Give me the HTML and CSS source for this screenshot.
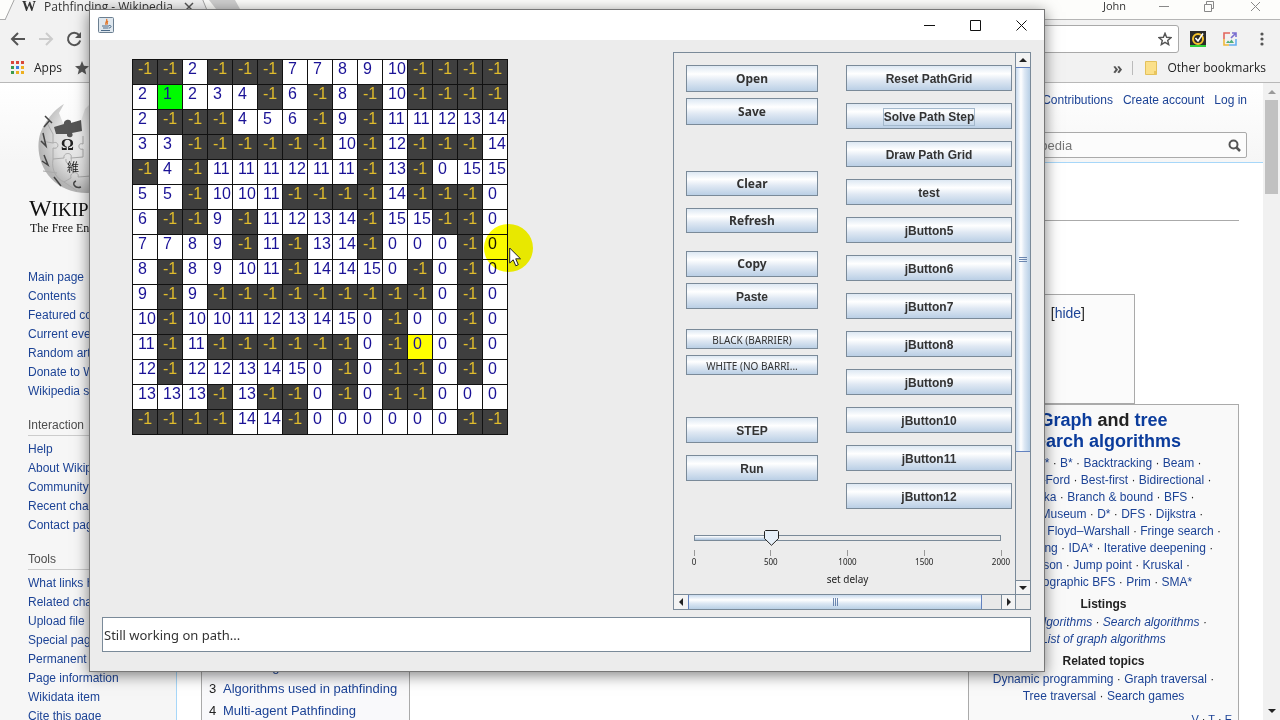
FILE: index.html
```html
<!DOCTYPE html>
<html lang="en">
<head>
  <meta charset="UTF-8">
  <title>Pathfinding - Wikipedia</title>
  <link rel="stylesheet" href="styles.css">
</head>
<body>
  <div class="browser">
    <div class="tabstrip">
      <svg class="tab-shape" width="245" height="20" viewBox="0 0 245 20">
        <path d="M0 20H5L15 -2H202L211 20H245" fill="#f2f2f2" stroke="#a5a5a5"/>
        <path d="M209 0H235L240 9H216Z" fill="#cfcfcf"/>
      </svg>
      <span class="favicon">W</span>
      <span class="tab-title">Pathfinding - Wikipedia</span>
      <svg class="tab-close" width="10" height="10" viewBox="0 0 10 10"><path d="M1 1L9 9M9 1L1 9" stroke="#555" stroke-width="1.5"/></svg>
      <span class="user">John</span>
      <svg class="win-buttons" width="104" height="14" viewBox="0 0 104 14" fill="none" stroke="#888">
        <path d="M1 6.5H11"/>
        <path d="M46.500 4.500h7v7h-7zM48.500 4V1.500h7v7H54"/>
        <path d="M93 2L102 11M102 2L93 11"/>
      </svg>
    </div>

    <div class="toolbar">
      <svg class="nav" width="18" height="18" viewBox="0 0 18 18"><path d="M16 9H3M9 3L3 9L9 15" fill="none" stroke="#555" stroke-width="2"/></svg>
      <svg class="nav" width="18" height="18" viewBox="0 0 18 18"><path d="M2 9H15M9 3L15 9L9 15" fill="none" stroke="#ccc" stroke-width="2"/></svg>
      <svg class="nav" width="18" height="18" viewBox="0 0 18 18"><path d="M14 5A6.200 6.200 0 1 0 15.200 10.500" fill="none" stroke="#555" stroke-width="2"/><path d="M16 2V8H10Z" fill="#555"/></svg>
      <div class="omnibox">
        <svg width="14" height="14" viewBox="0 0 14 14"><path d="M7 1.300L8.600 5.300L13 5.600L9.700 8.400L10.700 12.600L7 10.300L3.300 12.600L4.300 8.400L1 5.600L5.400 5.300Z" fill="none" stroke="#555" stroke-width="1.400"/></svg>
      </div>
      <svg class="ext" width="16" height="16" viewBox="0 0 16 16">
        <rect width="16" height="16" fill="#2b2b2b"/><rect y="14" width="16" height="2" fill="#2fd03a"/>
        <circle cx="8" cy="8" r="5" fill="none" stroke="#f5c32c" stroke-width="2"/>
        <path d="M5.500 7L8 10L13 2.500" fill="none" stroke="#fff" stroke-width="1.600"/>
      </svg>
      <svg class="ext" width="14" height="14" viewBox="0 0 14 14" fill="none" stroke-width="1.600">
        <path d="M7 1H1V7" stroke="#e2655c"/><path d="M1 7V13H6" stroke="#eeb93c"/><path d="M6 13H13V7" stroke="#65aef0"/>
        <path d="M8 6L12.500 1.500M9 1H13V5" stroke="#7a6fd0"/><path d="M3 11L5 8.500L6.500 10L8.500 7.500L11 11Z" fill="#4fae7c"/>
      </svg>
      <svg class="dots" width="4" height="16" viewBox="0 0 4 16" fill="#555"><circle cx="2" cy="3" r="1.600"/><circle cx="2" cy="8" r="1.600"/><circle cx="2" cy="13" r="1.600"/></svg>
    </div>

    <div class="bookmarks">
      <svg width="13" height="13" viewBox="0 0 13 13">
        <path d="M0 0h3v3h-3zM5 0h3v3h-3zM10 0h3v3h-3zM0 5h3v3h-3z" fill="#d9483b"/>
        <path d="M0 5h3v3h-3zM0 10h3v3h-3z" fill="#3b9a4d"/>
        <path d="M5 5h3v3h-3z" fill="#3d7fe0"/><path d="M5 10h3v3h-3zM10 5h3v3h-3zM10 10h3v3h-3z" fill="#edb021"/>
      </svg>
      <a href="#">Apps</a>
      <svg class="bm-star" width="14" height="14" viewBox="0 0 14 14"><path d="M7 0L8.900 4.800L14 5.200L10.100 8.500L11.300 13.500L7 10.800L2.700 13.500L3.900 8.500L0 5.200L5.100 4.800Z" fill="#555"/></svg>
      <span class="more">»</span>
      <svg class="folder" width="12" height="14" viewBox="0 0 12 14"><path d="M.5 .5H11.500V13.500H.5Z" fill="#fbe08a" stroke="#e3c15c"/><path d="M9 10h2.500v3.500H9z" fill="#e9c55e"/></svg>
      <a href="#">Other bookmarks</a>
    </div>

    <div class="page">
      <div class="sidebar">
        <div class="logo">
          <svg width="100" height="94" viewBox="0 0 100 94">
            <defs><radialGradient id="globe" cx="60%" cy="40%" r="60%"><stop offset="0" stop-color="#f7f7f7"/><stop offset=".7" stop-color="#dedede"/><stop offset="1" stop-color="#b4b4b4"/></radialGradient></defs>
            <path d="M27 3C18 8 5 22 2 38C-2 64 16 92 50 92C76 92 96 72 96 46C96 22 78 2 54 2L48 8L44 20L26 22L22 12Z" fill="url(#globe)"/>
            <path d="M17 26L27 23C26 18 35 17 34 22L44 19L45 30L35 32C38 37 29 38 30 33L19 33Z" fill="#555"/>
            <path d="M16 33V42C22 39 23 49 16 47V58L27 57C26 51 36 51 34 57L46 56M34 57C36 63 28 65 29 58M16 58C14 70 20 78 27 81L34 77C32 70 43 70 41 76L54 75M46 35V43C40 41 41 50 46 48V56M10 22L16 33M4 40L16 42M6 70L20 72M27 81L40 90" fill="none" stroke="#aaa"/>
            <path d="M8 15L15 22M13 19L7 26M6 32L9 45L4 40M7 54L11 64L5 60M17 76L24 85M39 80C34 82 38 88 44 86" fill="none" stroke="#444" stroke-width="1.500"/>
            <text class="glyph" x="24" y="49">Ω</text>
            <text class="glyph cjk" x="30" y="71">維</text>
          </svg>
          <div class="wordmark">W<small>IKIPEDI</small>A</div>
          <div class="tagline">The Free Encyclopedia</div>
        </div>
        <ul>
          <li><a href="#">Main page</a></li>
          <li><a href="#">Contents</a></li>
          <li><a href="#">Featured content</a></li>
          <li><a href="#">Current events</a></li>
          <li><a href="#">Random article</a></li>
          <li><a href="#">Donate to Wikipedia</a></li>
          <li><a href="#">Wikipedia store</a></li>
        </ul>
        <h3>Interaction</h3>
        <ul>
          <li><a href="#">Help</a></li>
          <li><a href="#">About Wikipedia</a></li>
          <li><a href="#">Community portal</a></li>
          <li><a href="#">Recent changes</a></li>
          <li><a href="#">Contact page</a></li>
        </ul>
        <h3>Tools</h3>
        <ul>
          <li><a href="#">What links here</a></li>
          <li><a href="#">Related changes</a></li>
          <li><a href="#">Upload file</a></li>
          <li><a href="#">Special pages</a></li>
          <li><a href="#">Permanent link</a></li>
          <li><a href="#">Page information</a></li>
          <li><a href="#">Wikidata item</a></li>
          <li><a href="#">Cite this page</a></li>
        </ul>
      </div>

      <div class="main">
        <div class="head">
          <div class="personal">
            <a href="#">Contributions</a>
            <a href="#">Create account</a>
            <a href="#">Log in</a>
          </div>
          <div class="search">
            <input type="text" placeholder="Search Wikipedia" aria-label="Search Wikipedia">
            <svg width="13" height="13" viewBox="0 0 13 13"><circle cx="5.500" cy="5.500" r="4" fill="none" stroke="#555" stroke-width="2"/><path d="M8.500 8.500L12 12" stroke="#555" stroke-width="2.500"/></svg>
          </div>
        </div>
        <div class="article">
          <div class="title-rule"></div>
          <div class="notice">[<a href="#">hide</a>]</div>
          <div class="columns">
            <div class="toc">
              <div><span>2</span><a href="#">In video games</a></div>
              <div><span>3</span><a href="#">Algorithms used in pathfinding</a></div>
              <div><span>4</span><a href="#">Multi-agent Pathfinding</a></div>
            </div>
            <div class="infobox">
              <h2><a href="#">Graph</a> and <a href="#">tree</a><br><a href="#">search algorithms</a></h2>
              <p><a href="#">α–β</a> · <a href="#">A*</a> · <a href="#">B*</a> · <a href="#">Backtracking</a> · <a href="#">Beam</a> ·</p>
              <p><a href="#">Bellman–Ford</a> · <a href="#">Best-first</a> · <a href="#">Bidirectional</a> ·</p>
              <p><a href="#">Borůvka</a> · <a href="#">Branch &amp; bound</a> · <a href="#">BFS</a> ·</p>
              <p><a href="#">British Museum</a> · <a href="#">D*</a> · <a href="#">DFS</a> · <a href="#">Dijkstra</a> ·</p>
              <p><a href="#">Edmonds</a> · <a href="#">Floyd–Warshall</a> · <a href="#">Fringe search</a> ·</p>
              <p><a href="#">Hill climbing</a> · <a href="#">IDA*</a> · <a href="#">Iterative deepening</a> ·</p>
              <p><a href="#">Johnson</a> · <a href="#">Jump point</a> · <a href="#">Kruskal</a> ·</p>
              <p><a href="#">Lexicographic BFS</a> · <a href="#">Prim</a> · <a href="#">SMA*</a></p>
              <h4>Listings</h4>
              <p class="italic"><a href="#">Graph algorithms</a> · <a href="#">Search algorithms</a> ·</p>
              <p class="italic"><a href="#">List of graph algorithms</a></p>
              <h4>Related topics</h4>
              <p><a href="#">Dynamic programming</a> · <a href="#">Graph traversal</a> ·</p>
              <p><a href="#">Tree traversal</a> · <a href="#">Search games</a></p>
              <p class="vte"><a href="#">V</a> · <a href="#">T</a> · <a href="#">E</a></p>
            </div>
          </div>
        </div>
      </div>

      <div class="page-scroll">
        <i class="arrow up"></i>
        <div class="page-thumb"></div>
        <i class="arrow down"></i>
      </div>
    </div>
  </div>

  <div class="window">
    <div class="titlebar">
      <svg width="16" height="16" viewBox="0 0 16 16">
        <rect x=".5" y=".5" width="15" height="15" rx="1" fill="#dfe7ee" stroke="#6b7f91"/>
        <path d="M8.500 2C10 4 6.500 5 8 8M10 4C8.500 5 9 6 9.500 7.500" fill="none" stroke="#e0762b" stroke-width="1.300"/>
        <path d="M4 9H11M5 11H10.500M3 13.500H12M11 8.500C14 8 13.500 11 11 11" fill="none" stroke="#4c6a88"/>
      </svg>
      <div class="controls">
        <button aria-label="Minimize"><svg width="11" height="11" viewBox="0 0 11 11"><path d="M0 5.500H11" stroke="#111"/></svg></button>
        <button aria-label="Maximize"><svg width="11" height="11" viewBox="0 0 11 11"><path d="M.5 .5H10.500V10.500H.5Z" fill="none" stroke="#111"/></svg></button>
        <button aria-label="Close"><svg width="11" height="11" viewBox="0 0 11 11"><path d="M.5 .5L10.500 10.500M10.500 .5L.5 10.500" stroke="#111"/></svg></button>
      </div>
    </div>

    <div class="body">
      <div class="row">
        <div class="board">
          <table id="grid"></table>
        </div>

        <div class="pane">
          <div class="view">
            <div class="buttons">
              <div class="col">
                <div class="group tall">
                  <button class="tahoma">Open</button>
                  <button class="tahoma">Save</button>
                </div>
                <div class="group edit">
                  <button class="tahoma">Clear</button>
                  <button class="tahoma">Refresh</button>
                </div>
                <div class="group clip">
                  <button class="tahoma">Copy</button>
                  <button>Paste</button>
                </div>
                <div class="group paint">
                  <button>BLACK (BARRIER)</button>
                  <button>WHITE (NO BARRI...</button>
                </div>
                <div class="group run">
                  <button>STEP</button>
                  <button>Run</button>
                </div>
              </div>
              <div class="col actions">
                <button>Reset PathGrid</button>
                <button class="focused"><span>Solve Path Step</span></button>
                <button>Draw Path Grid</button>
                <button>test</button>
                <button>jButton5</button>
                <button>jButton6</button>
                <button>jButton7</button>
                <button>jButton8</button>
                <button>jButton9</button>
                <button>jButton10</button>
                <button>jButton11</button>
                <button>jButton12</button>
              </div>
            </div>
            <div class="slider">
              <input type="range" id="delay" min="0" max="2000" value="500">
              <div class="ticks"><span>0</span><span>500</span><span>1000</span><span>1500</span><span>2000</span></div>
              <label for="delay">set delay</label>
            </div>
          </div>
          <div class="vbar">
            <div class="step"><i class="arrow up"></i></div>
            <div class="track"><div class="thumb"><i class="grip"></i></div></div>
            <div class="step"><i class="arrow down"></i></div>
          </div>
          <div class="hbar">
            <div class="step"><i class="arrow left"></i></div>
            <div class="track"><div class="thumb"><i class="grip"></i></div></div>
            <div class="step"><i class="arrow right"></i></div>
          </div>
          <div class="corner"></div>
        </div>
      </div>
      <input class="status" type="text" value="Still working on path..." aria-label="Status">
    </div>
  </div>

  <div class="spot"></div>
  <svg class="cursor" width="13" height="20" viewBox="0 0 13 20"><path d="M.7 1V16L4.200 12.800L6.800 18.800L9.300 17.700L6.700 11.800H11.500Z" fill="#fff" stroke="#222"/></svg>

  <script>
    // -1 is a barrier, 0 is not visited yet
    const grid = [
      [-1, -1, 2, -1, -1, -1, 7, 7, 8, 9, 10, -1, -1, -1, -1],
      [2, 1, 2, 3, 4, -1, 6, -1, 8, -1, 10, -1, -1, -1, -1],
      [2, -1, -1, -1, 4, 5, 6, -1, 9, -1, 11, 11, 12, 13, 14],
      [3, 3, -1, -1, -1, -1, -1, -1, 10, -1, 12, -1, -1, -1, 14],
      [-1, 4, -1, 11, 11, 11, 12, 11, 11, -1, 13, -1, 0, 15, 15],
      [5, 5, -1, 10, 10, 11, -1, -1, -1, -1, 14, -1, -1, -1, 0],
      [6, -1, -1, 9, -1, 11, 12, 13, 14, -1, 15, 15, -1, -1, 0],
      [7, 7, 8, 9, -1, 11, -1, 13, 14, -1, 0, 0, 0, -1, 0],
      [8, -1, 8, 9, 10, 11, -1, 14, 14, 15, 0, -1, 0, -1, 0],
      [9, -1, 9, -1, -1, -1, -1, -1, -1, -1, -1, -1, 0, -1, 0],
      [10, -1, 10, 10, 11, 12, 13, 14, 15, 0, -1, 0, 0, -1, 0],
      [11, -1, 11, -1, -1, -1, -1, -1, -1, 0, -1, 0, 0, -1, 0],
      [12, -1, 12, 12, 13, 14, 15, 0, -1, 0, -1, -1, 0, -1, 0],
      [13, 13, 13, -1, 13, -1, -1, 0, -1, 0, -1, -1, 0, 0, 0],
      [-1, -1, -1, -1, 14, 14, -1, 0, 0, 0, 0, 0, 0, -1, -1]
    ];
    const start = [1, 1];
    const goal = [11, 11];

    function drawGrid() {
      const table = document.getElementById("grid");
      grid.forEach((line, r) => {
        const tr = table.insertRow();
        line.forEach((value, c) => {
          const td = tr.insertCell();
          td.textContent = value;
          if (value === -1) td.className = "wall";
          if (r === start[0] && c === start[1]) td.className = "start";
          if (r === goal[0] && c === goal[1]) td.className = "goal";
        });
      });
    }

    drawGrid();
  </script>
</body>
</html>
```
FILE: styles.css
```css
* {
  box-sizing: border-box;
}

body {
  margin: 0;
  height: 100vh;
  overflow: hidden;
  position: relative;
  font-family: "Liberation Sans", Arial, sans-serif;
  font-size: 12px;
  color: #222;
}

a {
  color: #1c4396;
  text-decoration: none;
}

svg {
  display: block;
  flex: none;
}

ul {
  list-style: none;
  margin: 0;
  padding: 0;
}

/* browser */
.browser {
  height: 100vh;
  display: flex;
  flex-direction: column;
  background: #fff;
}

.tabstrip {
  position: relative;
  flex: none;
  height: 20px;
  display: flex;
  padding: 0 18px 0 22px;
  background: #fdfdfb;
  border-bottom: 1px solid #b5b5b5;
  font: 12px/14px "Open Sans", sans-serif;
  color: #333;
}

.tab-shape {
  position: absolute;
  left: 0;
  top: 0;
}

.favicon {
  position: relative;
  width: 22px;
  font: bold 14px/14px "Liberation Serif", serif;
}

.tab-title {
  position: relative;
  width: 140px;
  white-space: nowrap;
}

.tab-close {
  position: relative;
  margin-top: 2px;
}

.user {
  margin-left: auto;
  margin-right: 32px;
  font-size: 11px;
  line-height: 12px;
}

.toolbar {
  flex: none;
  height: 37px;
  display: flex;
  align-items: center;
  padding: 0 16px 0 9px;
  background: #f2f2f2;
}

.nav {
  margin-right: 10px;
}

.omnibox {
  flex: 1;
  height: 28px;
  display: flex;
  align-items: center;
  justify-content: flex-end;
  margin-left: 8px;
  padding-right: 6px;
  background: #fff;
  border: 1px solid #a9a9a9;
  border-radius: 3px;
}

.ext {
  margin-left: 11px;
  margin-right: 6px;
}

.dots {
  margin-left: 17px;
}

.bookmarks {
  flex: none;
  height: 26px;
  display: flex;
  align-items: center;
  padding: 0 14px 4px 11px;
  background: #f2f2f2;
  border-bottom: 1px solid #b8b8b8;
  font: 12px/18px "Open Sans", sans-serif;
}

.bookmarks a {
  margin-left: 10px;
  color: #222;
}

.bm-star {
  margin-left: 13px;
}

.more {
  margin-left: auto;
  padding-right: 10px;
  border-right: 1px solid #bbb;
  font-size: 16px;
  font-weight: bold;
  line-height: 14px;
  color: #555;
}

.folder {
  margin-left: 12px;
}

/* wiki page */
.page {
  flex: 1;
  min-height: 0;
  display: flex;
  overflow: hidden;
  background: linear-gradient(#fff, #f6f6f6 79px);
}

.sidebar {
  width: 176px;
  flex: none;
  padding: 18px 14px 0 28px;
}

.sidebar li {
  line-height: 19px;
  white-space: nowrap;
}

.sidebar h3 {
  margin: 15px 0 4px;
  border-bottom: 1px solid #ccc;
  font-size: 12px;
  font-weight: normal;
  line-height: 19px;
  color: #4d4d4d;
}

.logo {
  height: 167px;
  font-family: "Liberation Serif", serif;
  color: #111;
  white-space: nowrap;
}

.logo svg {
  margin-left: 9px;
}

.glyph {
  font: bold 16px "Liberation Serif", serif;
  fill: #222;
}

.cjk {
  font: 12px "Noto Sans CJK JP", sans-serif;
}

.wordmark {
  margin: 2px 0 0 1px;
  font-size: 24px;
  line-height: 23px;
}

.wordmark small {
  font-size: 19px;
}

.tagline {
  margin-left: 2px;
  line-height: 15px;
}

.main {
  flex: 1;
  min-width: 0;
}

.head {
  height: 80px;
  display: flex;
  flex-direction: column;
  align-items: flex-end;
  padding: 8px 16px 0 0;
  border-bottom: 1px solid #a7d7f9;
}

.personal {
  display: flex;
  gap: 10px;
  line-height: 18px;
}

.search {
  width: 284px;
  height: 26px;
  display: flex;
  align-items: center;
  margin-top: 23px;
  padding-right: 5px;
  background: #fcfcfc;
  border: 1px solid #aaa;
  border-radius: 2px;
}

.search input {
  flex: 1;
  min-width: 0;
  padding: 0 7px;
  border: 0;
  background: none;
  font: 13px "Liberation Sans", sans-serif;
}

.search input::placeholder {
  color: #777;
}

.article {
  padding: 0 24px;
  background: #fff;
  border-left: 1px solid #a7d7f9;
}

.title-rule {
  height: 58px;
  border-bottom: 1px solid #aaa;
}

.notice {
  width: 300px;
  height: 110px;
  margin: 73px 104px 0 auto;
  padding: 9px 49px;
  background: #fbfbfb;
  border: 1px solid #aaa;
  font-size: 14px;
  line-height: 18px;
  text-align: right;
}

.columns {
  display: flex;
  justify-content: space-between;
  align-items: flex-start;
}

.toc {
  margin-top: 243px;
  width: 209px;
  padding: 8px 7px;
  background: #f9f9fb;
  border: 1px solid #aaa;
  font-size: 13px;
  line-height: 22px;
  white-space: nowrap;
}

.toc span {
  display: inline-block;
  width: 14px;
}

.infobox {
  width: 271px;
  padding: 5px 6px;
  background: #f9f9f9;
  border: 1px solid #aaa;
  line-height: 17px;
  text-align: center;
}

.infobox h2 {
  margin: 0 0 3px;
  font-size: 18px;
  line-height: 21px;
}

.infobox h2 a {
  color: #0b3c9c;
}

.infobox p {
  margin: 0;
  white-space: nowrap;
}

.infobox h4 {
  margin: 5px 0 1px;
  font-size: 12px;
}

.infobox .italic {
  font-style: italic;
}

.infobox .vte {
  margin-top: 6px;
  font-size: 11px;
  text-align: right;
}

.page-scroll {
  width: 17px;
  flex: none;
  display: flex;
  flex-direction: column;
  align-items: center;
  padding: 7px 0;
  background: #f1f1f1;
}

.page-thumb {
  width: 13px;
  height: 94px;
  margin: 6px 0 auto;
  background: #c1c1c1;
}

/* arrows shared by all scrollbars */
.arrow {
  border: 4px solid transparent;
}

.arrow.up {
  border-top: 0;
  border-bottom-color: #222;
}

.arrow.down {
  border-bottom: 0;
  border-top-color: #222;
}

.arrow.left {
  border-left: 0;
  border-right-color: #222;
}

.arrow.right {
  border-right: 0;
  border-left-color: #222;
}

.page-scroll .arrow.up {
  border-bottom-color: #999;
}

/* java window */
.window {
  position: absolute;
  left: 89px;
  right: 235px;
  top: 9px;
  background: #ececec;
  border: 1px solid #777;
  box-shadow: 0 3px 14px rgba(0, 0, 0, 0.5);
}

.titlebar {
  height: 30px;
  display: flex;
  align-items: center;
  justify-content: space-between;
  padding-left: 8px;
  background: #fff;
}

.controls {
  display: flex;
}

.controls button {
  width: 46px;
  height: 28px;
  display: flex;
  align-items: center;
  justify-content: center;
  padding: 0;
  border: 0;
  background: none;
}

.body {
  padding: 12px 13px 19px 12px;
}

.row {
  display: flex;
  justify-content: space-between;
}

.board {
  padding: 7px 0 0 30px;
}

#grid {
  border-collapse: collapse;
  table-layout: fixed;
  width: 376px;
}

#grid td {
  height: 25px;
  padding: 0 0 6px 5px;
  border: 1px solid #111;
  background: #fff;
  color: #1a1296;
  font-size: 16px;
  line-height: 18px;
  white-space: nowrap;
}

#grid .wall {
  background: #3f3f3f;
  color: #e0bc2c;
}

#grid .start {
  background: #00fb00;
}

#grid .goal {
  background: #ffff00;
}

.pane {
  width: 358px;
  display: grid;
  grid-template-columns: 1fr 15px;
  grid-template-rows: auto 15px;
  border: 1px solid #7a8a99;
}

.view {
  padding: 12px 3px 6px 12px;
}

.buttons {
  display: grid;
  grid-template-columns: 132px 166px;
  gap: 28px;
}

.col button {
  display: block;
  width: 100%;
  height: 26px;
  padding: 2px 0 0;
  border: 1px solid #7a8a99;
  border-radius: 0;
  background: linear-gradient(#dde8f3, #fff 32%, #dfe8f3 60%, #bacfe5);
  font: bold 12px/16px "Liberation Sans", Arial, sans-serif;
  color: #333;
}

.group {
  display: grid;
  gap: 6px;
}

.tall button {
  height: 27px;
}

.edit {
  margin-top: 46px;
  gap: 12px;
}

.edit button {
  height: 25px;
}

.clip {
  margin-top: 18px;
}

.paint {
  margin-top: 20px;
}

.paint button {
  height: 20px;
  font: 10px/14px "Noto Sans", sans-serif;
}

.run {
  margin-top: 42px;
  gap: 12px;
}

.col .tahoma {
  padding: 0;
  font-family: "Noto Sans", sans-serif;
}

.actions {
  display: grid;
  gap: 12px;
}

.focused span {
  display: inline-block;
  outline: 1px solid #a3b8cc;
}

.slider {
  margin: 21px -1px 0 -4px;
  text-align: center;
  font-family: "Noto Sans", sans-serif;
}

.slider input {
  display: block;
  width: calc(100% - 10px);
  height: 16px;
  margin: 0 5px;
  appearance: none;
  background:
    linear-gradient(#fff, #a9c2dd) 8px 6px / 74px 4px no-repeat,
    linear-gradient(#ececec, #ececec) 8px 6px / calc(100% - 16px) 4px no-repeat,
    linear-gradient(#7a8a99, #7a8a99) 7px 5px / calc(100% - 14px) 6px no-repeat;
}

.slider input::-webkit-slider-thumb {
  appearance: none;
  width: 15px;
  height: 16px;
  background: url("data:image/svg+xml,%3Csvg xmlns='http://www.w3.org/2000/svg' width='15' height='16'%3E%3Cpath d='M.5 1.500L1.500 .5H13.500L14.500 1.500V8.500L7.500 15.300L.5 8.500Z' fill='%23e6eff8' stroke='%23222'/%3E%3C/svg%3E") no-repeat;
}

.ticks {
  display: flex;
  justify-content: space-between;
  margin-top: 4px;
  font-size: 8px;
  line-height: 12px;
}

.ticks span {
  width: 24px;
}

.ticks span::before {
  content: "";
  display: block;
  width: 1px;
  height: 6px;
  margin: 0 auto;
  background: #999;
}

.slider label {
  display: block;
  margin-top: 3px;
  font-size: 10px;
  line-height: 17px;
}

/* metal scrollbars */
.vbar,
.hbar {
  display: flex;
  background: #e9e9e9;
}

.vbar {
  flex-direction: column;
  border-left: 1px solid #7a8a99;
}

.hbar {
  border-top: 1px solid #7a8a99;
}

.step {
  flex: none;
  width: 14px;
  height: 14px;
  display: flex;
  align-items: center;
  justify-content: center;
  background: #f3f3f3;
}

.track {
  flex: 1;
}

.thumb {
  display: flex;
  align-items: center;
  justify-content: center;
  border: 1px solid #6382bf;
}

.vbar .thumb {
  height: 75%;
  border-width: 1px 0;
  background: linear-gradient(90deg, #c8daee, #fff 35%, #dde8f4 60%, #b8cfe5);
}

.hbar .thumb {
  width: 94%;
  height: 100%;
  border-width: 0 1px;
  background: linear-gradient(#c8daee, #fff 35%, #dde8f4 60%, #b8cfe5);
}

.vbar .step:last-child {
  border-top: 1px solid #7a8a99;
}

.hbar .step:last-child {
  border-left: 1px solid #7a8a99;
}

.grip {
  width: 8px;
  height: 5px;
  border: 1px solid #6c87b0;
  border-width: 1px 0;
  background: linear-gradient(#6c87b0, #6c87b0) 0 1px / 8px 1px no-repeat;
}

.hbar .grip {
  width: 5px;
  height: 8px;
  border-width: 0 1px;
  background: linear-gradient(#6c87b0, #6c87b0) 1px 0 / 1px 8px no-repeat;
}

.corner {
  border-top: 1px solid #7a8a99;
  border-left: 1px solid #7a8a99;
}

.status {
  display: block;
  width: 100%;
  height: 35px;
  margin-top: 7px;
  padding: 0 1px;
  border: 1px solid #7a8a99;
  background: #fff;
  color: #333;
  font: 13px "Noto Sans", sans-serif;
}

/* highlighted mouse pointer */
.spot {
  position: absolute;
  left: 484px;
  top: 224px;
  width: 49px;
  height: 48px;
  border-radius: 50%;
  background: #fbfb00;
  mix-blend-mode: multiply;
}

.cursor {
  position: absolute;
  left: 509px;
  top: 247px;
}
```
